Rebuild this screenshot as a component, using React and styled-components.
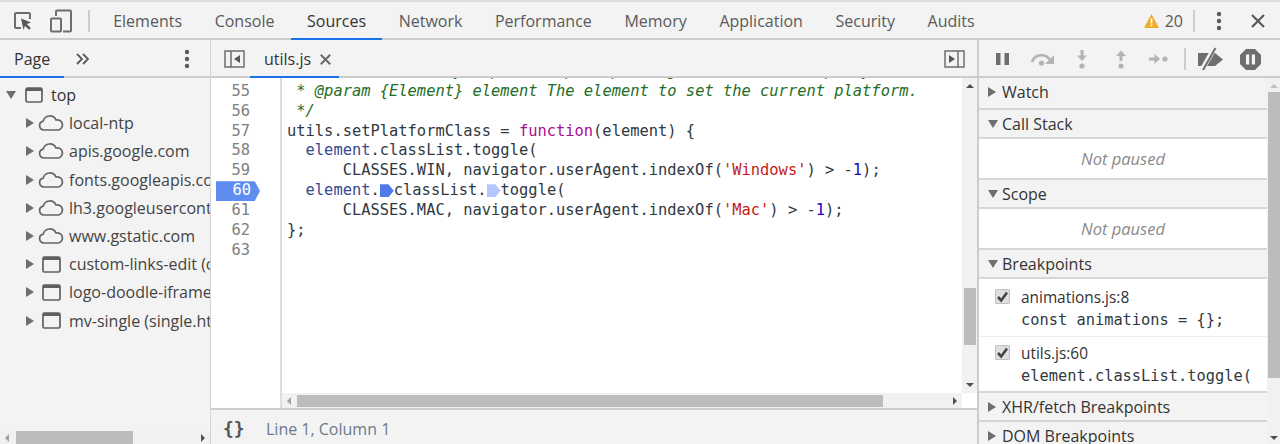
import React from "react";
import styled, { createGlobalStyle } from "styled-components";

const Global = createGlobalStyle`
  html, body { margin: 0; padding: 0; background: #f3f3f3; overflow: hidden; }
  #root { width: 1280px; height: 444px; }
`;
const UI = `"Open Sans", "Noto Sans", sans-serif`;
const MONO = `"DejaVu Sans Mono", "Liberation Mono", monospace`;

const Page = styled.div`
  width: 1280px; height: 444px; overflow: hidden; display: flex; flex-direction: column;
  font-family: ${UI}; font-size: 16px; color: #5a5a5a; background: #f3f3f3;
  border-top: 2px solid #dcdcdc; box-sizing: border-box;
`;
const TopBar = styled.div`
  height: 34px; padding-top: 2px; flex: none; display: flex; align-items: center; border-bottom: 2px solid #ccc;
`;
const IconSlot = styled.span`
  display: inline-flex; align-items: center; justify-content: center; flex: none;
  width: ${p => p.$w}px; height: ${p => p.$h || 24}px; margin-left: ${p => p.$ml || 0}px;
`;
const VRule = styled.span`
  flex: none; width: 1.5px; height: ${p => p.$h || 22}px; background: #ccc; margin-left: ${p => p.$ml}px;
`;
const Tabs = styled.div`display: flex; height: 100%; margin-left: 7.4px;`;
const Tab = styled.div`
  padding: 0 16.3px; display: flex; align-items: center; height: 36px; margin-bottom: -2px; box-sizing: border-box;
  color: ${p => (p.$active ? "#333" : "#5a5a5a")}; white-space: nowrap;
  border-bottom: 2px solid ${p => (p.$active ? "#1a73e8" : "transparent")};
`;
const Push = styled.div`flex: 1;`;
const Count = styled.span`margin-left: 6px;`;

const Main = styled.div`flex: 1; min-height: 0; display: grid; grid-template-columns: 211px 767px 1fr;`;
const LeftColumn = styled.div`
  display: flex; flex-direction: column; min-width: 0; min-height: 0; border-right: 1px solid #d4d4d4; box-sizing: border-box;
`;
const CenterColumn = styled.div`display: flex; flex-direction: column; min-width: 0; min-height: 0;`;
const RightColumn = styled.div`
  display: flex; flex-direction: column; min-width: 0; min-height: 0; border-left: 2px solid #ccc; margin-left: -1px;
`;
const SubBar = styled.div`
  height: 34px; padding-top: 2px; flex: none; display: flex; align-items: center; border-bottom: 2px solid #ccc;
`;
const SubTab = styled.div`
  height: 36px; margin-bottom: -2px; box-sizing: border-box; display: flex; align-items: center;
  padding: 0 ${p => p.$pr}px 0 14px; margin-left: ${p => p.$ml || 0}px; color: #333;
  border-bottom: 2px solid #1a73e8;
`;

const Tree = styled.div`flex: 1; min-height: 0; padding-top: 3px; overflow: hidden;`;
const TreeRow = styled.div`
  height: 28.2px; display: flex; align-items: center; white-space: nowrap; overflow: hidden;
  padding-left: ${p => p.$indent}px; color: ${p => (p.$top ? "#333" : "#444")};
`;
const TreeLabel = styled.span`margin-left: ${p => p.$ml}px;`;
const Tri = styled.span`
  flex: none; display: inline-block; width: 0; height: 0;
  ${p => p.$dir === "down"
    ? `border-left: 5.5px solid transparent; border-right: 5.5px solid transparent; border-top: 8px solid #6e6e6e;`
    : `border-top: 5.5px solid transparent; border-bottom: 5.5px solid transparent; border-left: 8px solid #6e6e6e;`}
`;
const HScroll = styled.div`
  flex: none; height: 13px; background: #f1f1f1; display: flex; align-items: center;
`;
const Thumb = styled.div`
  background: #bcbcbc; height: ${p => p.$h || 13}px; flex: none; width: ${p => p.$w}px; margin-left: ${p => p.$ml}px;
`;
const SmallArrow = styled.span`
  flex: none; width: 0; height: 0; display: inline-block;
  margin-left: ${p => p.$ml || 0}px; margin-right: ${p => p.$mr || 0}px;
  ${p => p.$dir === "left" && `border-top: 4px solid transparent; border-bottom: 4px solid transparent; border-right: 4px solid #a0a0a0;`}
  ${p => p.$dir === "right" && `border-top: 4px solid transparent; border-bottom: 4px solid transparent; border-left: 4px solid #505050;`}
  ${p => p.$dir === "up" && `border-left: 4px solid transparent; border-right: 4px solid transparent; border-bottom: 4px solid ${p.$c || "#505050"};`}
  ${p => p.$dir === "down" && `border-left: 4px solid transparent; border-right: 4px solid transparent; border-top: 4px solid #505050;`}
`;

const Editor = styled.div`
  flex: 1; min-height: 0; display: grid; grid-template-columns: 69px 2px 1fr 16px; grid-template-rows: 1fr 15px; background: #fff;
`;
const Gutter = styled.div`
  grid-row: 1 / 3; overflow: hidden; font-family: ${MONO}; font-size: 15.4px; color: #808080; background: #fff;
`;
const ScrolledLines = styled.div`margin-top: -16px;`;
const LineNo = styled.div`
  height: 19.86px; line-height: 19.86px; text-align: right; padding-right: 30px;
  ${p => p.$bp && `
    margin-left: 5px; width: 44px; box-sizing: border-box; color: #fff; padding-right: 9px;
    background: #5f8def;
    clip-path: polygon(0 0, 88% 0, 100% 50%, 88% 100%, 0 100%);
  `}
`;
const GutterRule = styled.div`grid-row: 1 / 3; background: #ddd;`;
const CodeArea = styled.div`overflow: hidden; padding-left: 5px; font-family: ${MONO}; font-size: 15.42px; color: #303942; background: #fff;`;
const CodeLine = styled.div`height: 19.86px; line-height: 19.86px; white-space: pre;`;
const Cm = styled.span`color: #236e25; font-style: italic;`;
const Kw = styled.span`color: #aa0d91;`;
const Str = styled.span`color: #c41a16;`;
const Var = styled.span`color: #3a4a8f;`;
const Num = styled.span`color: #1c00cf;`;
const Marker = styled.span`
  display: inline-block; width: 14px; height: 13px; vertical-align: -2px;
  background: ${p => (p.$light ? "#b4c6fb" : "#4f7be8")};
  clip-path: polygon(0 0, 62% 0, 100% 50%, 62% 100%, 0 100%);
`;
const VScroll = styled.div`
  grid-row: 1; grid-column: 4; background: #f1f1f1; display: flex; flex-direction: column; align-items: center; padding: 6px 0; box-sizing: border-box;
`;
const VThumb = styled.div`
  width: 12px; flex: none; background: #bcbcbc; height: ${p => p.$h}px; margin-top: ${p => p.$mt}px;
`;
const Spacer = styled.div`flex: 1;`;
const CodeHScroll = styled.div`
  grid-column: 3; grid-row: 2; background: #f1f1f1; display: flex; align-items: center; height: 15px;
`;
const StatusBar = styled.div`
  height: 31px; padding-top: 3px; flex: none; border-top: 2px solid #ccc; display: flex; align-items: center; color: #6b7a8c;
`;
const Braces = styled.span`
  flex: none; font-family: ${MONO}; font-weight: 700; font-size: 18px; color: #555; margin-left: 12px; width: 43px;
`;

const RightWrap = styled.div`display: flex; flex: 1; min-height: 0;`;
const Sections = styled.div`flex: 1; min-width: 0; overflow: hidden;`;
const SectionHead = styled.div`
  height: ${p => p.$h || 27}px; padding-bottom: ${p => p.$pb || 0}px; display: flex; align-items: center; padding-left: 9px; color: #333; border-bottom: 2px solid #d6d6d6;
`;
const HeadLabel = styled.span`margin-left: ${p => p.$ml || 7}px;`;
const Empty = styled.div`
  height: 39px; background: #fff; display: flex; align-items: center; justify-content: center; font-style: italic; font-size: 16.5px; color: #8a8a8a; border-bottom: 2px solid #d6d6d6;
`;
const BpList = styled.div`background: #fff; padding-top: 2px; border-bottom: 2px solid #d6d6d6;`;
const BpItem = styled.div`
  height: ${p => (p.$last ? 54 : 55)}px; display: grid; grid-template-columns: 42px 1fr; align-items: start; color: #333;
  border-bottom: ${p => (p.$last ? "none" : "1px solid #eee")};
`;
const Check = styled.span`
  width: 15px; height: 15px; background: #e0e0e0; border-radius: 2px; margin: 8px 0 0 16px; display: flex; align-items: center; justify-content: center;
  box-shadow: inset 0 0 0 1px #c0c0c0;
`;
const BpText = styled.div`display: flex; flex-direction: column; padding-top: 4.5px;`;
const BpFile = styled.div`height: 23.5px; line-height: 23px; font-size: 15.4px;`;
const BpCode = styled.div`height: 23px; line-height: 23px; font-family: ${MONO}; font-size: 15.35px; color: #303942; white-space: pre;`;
const PageScroll = styled.div`
  flex: none; width: 13px; background: #f1f1f1; display: flex; flex-direction: column; align-items: center; padding: 6px 0 4px; box-sizing: border-box;
`;
const PageThumb = styled.div`width: 12px; height: 286px; background: #bcbcbc; margin-top: 4px; flex: none;`;

const Stroke = { fill: "none", stroke: "#6e6e6e", strokeWidth: 2 };
const Inspect = () => (
  <svg width="20" height="20" viewBox="0 0 20 20">
    <path d="M8 17H3a1 1 0 0 1-1-1V3a1 1 0 0 1 1-1h13a1 1 0 0 1 1 1v5" {...Stroke} />
    <path d="M8 7.5l10 4-4.2 1.4 4 4-1.8 1.8-4-4L10.6 19z" fill="#555" />
  </svg>
);
const Device = () => (
  <svg width="24" height="24" viewBox="0 0 24 24">
    <path d="M7 7V2.5a1 1 0 0 1 1-1h13a1 1 0 0 1 1 1v19a1 1 0 0 1-1 1H14" {...Stroke} />
    <rect x="2" y="9.5" width="10" height="13" rx="1" {...Stroke} />
  </svg>
);
const Warn = () => (
  <svg width="15" height="14" viewBox="0 0 15 14">
    <path d="M7.5 0L15 14H0z" fill="#f2ab26" />
    <rect x="6.6" y="4.5" width="1.8" height="5" fill="#fff" />
    <rect x="6.6" y="10.5" width="1.8" height="1.8" fill="#fff" />
  </svg>
);
const Dots = ({ c = "#5a5a5a" }) => (
  <svg width="6" height="20" viewBox="0 0 6 20">
    <circle cx="3" cy="3" r="2.2" fill={c} /><circle cx="3" cy="10" r="2.2" fill={c} /><circle cx="3" cy="17" r="2.2" fill={c} />
  </svg>
);
const Cross = ({ s = 14, w = 2.2, c = "#5a5a5a" }) => (
  <svg width={s} height={s} viewBox="0 0 14 14"><path d="M1 1l12 12M13 1L1 13" stroke={c} strokeWidth={w} fill="none" /></svg>
);
const Chevrons = () => (
  <svg width="14" height="12" viewBox="0 0 14 12"><path d="M1 1l5 5-5 5M7 1l5 5-5 5" stroke="#5a5a5a" strokeWidth="1.8" fill="none" /></svg>
);
const WinIcon = ({ s = 17, h = 15 }) => (
  <svg width={s} height={h} viewBox={`0 0 ${s} ${h}`}>
    <rect x="1" y="1" width={s - 2} height={h - 2} rx="1.5" fill="none" stroke="#5f5f5f" strokeWidth="1.7" />
    <rect x="1" y="1" width={s - 2} height="3" fill="#5f5f5f" />
  </svg>
);
const Cloud = () => (
  <svg width="26" height="16" viewBox="0 0 26 16">
    <path d="M6 15a4.5 4.5 0 0 1-.8-8.9A6.8 6.8 0 0 1 18 5a5 5 0 0 1 2.5 10z" fill="none" stroke="#666" strokeWidth="1.7" />
  </svg>
);
const PaneLeft = () => (
  <svg width="21" height="18" viewBox="0 0 21 18">
    <rect x="1" y="1" width="19" height="16" fill="none" stroke="#6e6e6e" strokeWidth="1.5" />
    <path d="M7 1v16" stroke="#6e6e6e" strokeWidth="1.5" /><path d="M16 5v8l-6-4z" fill="#555" />
  </svg>
);
const PaneRight = () => (
  <svg width="21" height="18" viewBox="0 0 21 18">
    <rect x="1" y="1" width="19" height="16" fill="none" stroke="#6e6e6e" strokeWidth="1.5" />
    <path d="M14 1v16" stroke="#6e6e6e" strokeWidth="1.5" /><path d="M5 5v8l6-4z" fill="#555" />
  </svg>
);
const Pause = () => (
  <svg width="14" height="12" viewBox="0 0 14 12"><rect x="0" y="0" width="4.5" height="12" fill="#6e6e6e" /><rect x="8.5" y="0" width="4.5" height="12" fill="#6e6e6e" /></svg>
);
const StepOver = () => (
  <svg width="26" height="14" viewBox="0 0 26 14">
    <path d="M2 10a10 10 0 0 1 18-2" fill="none" stroke="#b4b4b4" strokeWidth="2.6" />
    <path d="M24 3v9h-9z" fill="#b4b4b4" /><circle cx="11.5" cy="11" r="2.6" fill="#b4b4b4" />
  </svg>
);
const StepDown = () => (
  <svg width="12" height="19" viewBox="0 0 12 19">
    <rect x="4.5" y="0" width="3" height="6" fill="#b4b4b4" /><path d="M1 5.5h10L6 11z" fill="#b4b4b4" /><circle cx="6" cy="16" r="2.6" fill="#b4b4b4" />
  </svg>
);
const StepUp = () => (
  <svg width="12" height="19" viewBox="0 0 12 19">
    <path d="M1 6h10L6 .5z" fill="#b4b4b4" /><rect x="4.5" y="5" width="3" height="6" fill="#b4b4b4" /><circle cx="6" cy="16" r="2.6" fill="#b4b4b4" />
  </svg>
);
const StepRight = () => (
  <svg width="19" height="12" viewBox="0 0 19 12">
    <rect x="0" y="4.5" width="6" height="3" fill="#b4b4b4" /><path d="M5.5 1v10l5.5-5z" fill="#b4b4b4" /><circle cx="16" cy="6" r="2.6" fill="#b4b4b4" />
  </svg>
);
const Deactivate = () => (
  <svg width="27" height="24" viewBox="0 0 27 24">
    <path d="M1 6h17l8 6.5-8 6.5H1z" fill="#6e6e6e" />
    <path d="M18 0L5 23" stroke="#f3f3f3" strokeWidth="5" />
    <path d="M18.5 1L6 23" stroke="#6e6e6e" strokeWidth="2" />
  </svg>
);
const PauseEx = () => (
  <svg width="21" height="21" viewBox="0 0 21 21">
    <path d="M6 0h9l6 6v9l-6 6H6l-6-6V6z" fill="#6e6e6e" />
    <rect x="6" y="5.5" width="3.2" height="10" fill="#f3f3f3" /><rect x="11.8" y="5.5" width="3.2" height="10" fill="#f3f3f3" />
  </svg>
);
const Tick = () => (
  <svg width="13" height="12" viewBox="0 0 13 12"><path d="M2 6l3.2 3.4L11 1.5" stroke="#444" strokeWidth="2.6" fill="none" /></svg>
);

const TABS = ["Elements", "Console", "Sources", "Network", "Performance", "Memory", "Application", "Security", "Audits"];
const NUMS = [54, 55, 56, 57, 58, 59, 60, 61, 62, 63];
const TREE = [
  ["cloud", "local-ntp"], ["cloud", "apis.google.com"], ["cloud", "fonts.googleapis.com"],
  ["cloud", "lh3.googleusercontent.com"], ["cloud", "www.gstatic.com"],
  ["win", "custom-links-edit (custom-links-edit.html)"], ["win", "logo-doodle-iframe"], ["win", "mv-single (single.html)"],
];

export default function App() {
  return (
    <Page>
      <Global />
      <TopBar>
        <IconSlot $w={20} $ml={13}><Inspect /></IconSlot>
        <IconSlot $w={24} $ml={16}><Device /></IconSlot>
        <VRule $ml={15} />
        <Tabs>{TABS.map(t => <Tab key={t} $active={t === "Sources"}>{t}</Tab>)}</Tabs>
        <Push />
        <Warn />
        <Count>20</Count>
        <VRule $ml={10} />
        <IconSlot $w={6} $ml={21.5}><Dots /></IconSlot>
        <IconSlot $w={14} $ml={29}><Cross /></IconSlot>
        <IconSlot $w={15} />
      </TopBar>
      <Main>
        <LeftColumn>
          <SubBar>
            <SubTab $pr={14}>Page</SubTab>
            <IconSlot $w={14} $ml={12}><Chevrons /></IconSlot>
            <IconSlot $w={6} $ml={94}><Dots /></IconSlot>
          </SubBar>
          <Tree>
            <TreeRow $indent={6} $top><Tri $dir="down" /><IconSlot $w={18} $ml={9}><WinIcon s={18} h={16} /></IconSlot><TreeLabel $ml={8}>top</TreeLabel></TreeRow>
            {TREE.map(([k, n]) => (
              <TreeRow key={n} $indent={26}>
                <Tri $dir="right" />
                <IconSlot $w={26} $ml={4}>{k === "cloud" ? <Cloud /> : <WinIcon s={19} h={17} />}</IconSlot>
                <TreeLabel $ml={5}>{n}</TreeLabel>
              </TreeRow>
            ))}
          </Tree>
          <HScroll>
            <SmallArrow $dir="left" $ml={5} />
            <Thumb $w={117} $ml={7} />
            <SmallArrow $dir="right" $ml={68} />
          </HScroll>
        </LeftColumn>
        <CenterColumn>
          <SubBar>
            <IconSlot $w={21} $ml={13}><PaneLeft /></IconSlot>
            <SubTab $pr={8} $ml={5}>utils.js<IconSlot $w={11} $ml={9}><Cross s={11} w={2.4} c="#666" /></IconSlot></SubTab>
            <Push />
            <IconSlot $w={21}><PaneRight /></IconSlot>
            <IconSlot $w={13} />
          </SubBar>
          <Editor>
            <Gutter>
              <ScrolledLines>
                {NUMS.map(n => <LineNo key={n} $bp={n === 60}>{n === 54 ? "" : n}</LineNo>)}
              </ScrolledLines>
            </Gutter>
            <GutterRule />
            <CodeArea>
              <ScrolledLines>
                <CodeLine><Cm> * Sets the name by top the map a up along the whole backup key</Cm></CodeLine>
                <CodeLine><Cm> * @param {"{Element}"} element The element to set the current platform.</Cm></CodeLine>
                <CodeLine><Cm> */</Cm></CodeLine>
                <CodeLine>utils.setPlatformClass = <Kw>function</Kw>(element) {"{"}</CodeLine>
                <CodeLine>  <Var>element</Var>.classList.toggle(</CodeLine>
                <CodeLine>      CLASSES.WIN, navigator.userAgent.indexOf(<Str>'Windows'</Str>) &gt; -<Num>1</Num>);</CodeLine>
                <CodeLine>  <Var>element</Var>.<Marker />classList.<Marker $light />toggle(</CodeLine>
                <CodeLine>      CLASSES.MAC, navigator.userAgent.indexOf(<Str>'Mac'</Str>) &gt; -<Num>1</Num>);</CodeLine>
                <CodeLine>{"};"}</CodeLine>
              </ScrolledLines>
            </CodeArea>
            <VScroll>
              <SmallArrow $dir="up" />
              <VThumb $h={57} $mt={200} />
              <Spacer />
              <SmallArrow $dir="down" />
            </VScroll>
            <CodeHScroll>
              <SmallArrow $dir="left" $ml={5} />
              <Thumb $w={586} $ml={6} $h={12} />
              <Spacer />
              <SmallArrow $dir="right" $mr={5} />
            </CodeHScroll>
          </Editor>
          <StatusBar>
            <Braces>{"{}"}</Braces>
            <span>Line 1, Column 1</span>
          </StatusBar>
        </CenterColumn>
        <RightColumn>
          <SubBar>
            <IconSlot $w={14} $ml={17}><Pause /></IconSlot>
            <IconSlot $w={26} $ml={20}><StepOver /></IconSlot>
            <IconSlot $w={12} $ml={20}><StepDown /></IconSlot>
            <IconSlot $w={12} $ml={27}><StepUp /></IconSlot>
            <IconSlot $w={19} $ml={22}><StepRight /></IconSlot>
            <VRule $ml={16} />
            <IconSlot $w={27} $ml={11.5}><Deactivate /></IconSlot>
            <IconSlot $w={21} $ml={16}><PauseEx /></IconSlot>
          </SubBar>
          <RightWrap>
            <Sections>
              <SectionHead $h={28} $pb={2}><Tri $dir="right" /><HeadLabel $ml={6}>Watch</HeadLabel></SectionHead>
              <SectionHead><Tri $dir="down" /><HeadLabel $ml={4}>Call Stack</HeadLabel></SectionHead>
              <Empty>Not paused</Empty>
              <SectionHead><Tri $dir="down" /><HeadLabel $ml={4}>Scope</HeadLabel></SectionHead>
              <Empty>Not paused</Empty>
              <SectionHead><Tri $dir="down" /><HeadLabel $ml={4}>Breakpoints</HeadLabel></SectionHead>
              <BpList>
                <BpItem>
                  <Check><Tick /></Check>
                  <BpText><BpFile>animations.js:8</BpFile><BpCode>const animations = {"{}"};</BpCode></BpText>
                </BpItem>
                <BpItem $last>
                  <Check><Tick /></Check>
                  <BpText><BpFile>utils.js:60</BpFile><BpCode>element.classList.toggle(</BpCode></BpText>
                </BpItem>
              </BpList>
              <SectionHead><Tri $dir="right" /><HeadLabel $ml={6}>XHR/fetch Breakpoints</HeadLabel></SectionHead>
              <SectionHead><Tri $dir="right" /><HeadLabel $ml={6}>DOM Breakpoints</HeadLabel></SectionHead>
            </Sections>
            <PageScroll>
              <SmallArrow $dir="up" $c="#c0c0c0" />
              <PageThumb />
              <Spacer />
              <SmallArrow $dir="down" />
            </PageScroll>
          </RightWrap>
        </RightColumn>
      </Main>
    </Page>
  );
}
